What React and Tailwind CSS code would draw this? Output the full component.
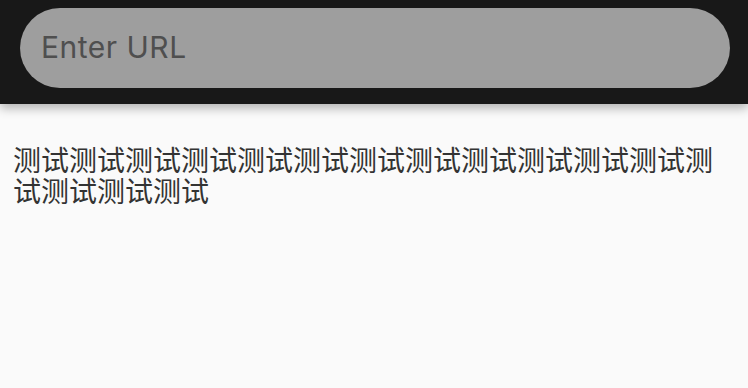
import React from 'react'

const App = () => {
  const text = '测试'.repeat(16)

  return (
    <div className="min-h-[388px] w-full bg-[#fafafa]" style={{ fontFamily: 'Inter, "Noto Sans CJK SC", sans-serif' }}>
      <header className="relative z-10 flex h-[104px] items-start bg-[#181818] pl-[20px] pr-[18px] pt-[8px] shadow-[0_4px_10px_rgba(0,0,0,0.3)]">
        <input
          type="text"
          placeholder="Enter URL"
          className="h-[80px] w-full rounded-full bg-[#9e9e9e] pl-[21px] pr-[20px] pb-[3px] text-[30px] tracking-[0.5px] text-[#4f4f4f] outline-none placeholder:text-[#4f4f4f]"
        />
      </header>
      <p
        className="px-[13px] pt-[40px] text-[28px] leading-[31px] text-[#333333]"
        style={{ fontFamily: '"Noto Sans CJK SC", sans-serif' }}
      >
        {text}
      </p>
    </div>
  )
}

export default App
